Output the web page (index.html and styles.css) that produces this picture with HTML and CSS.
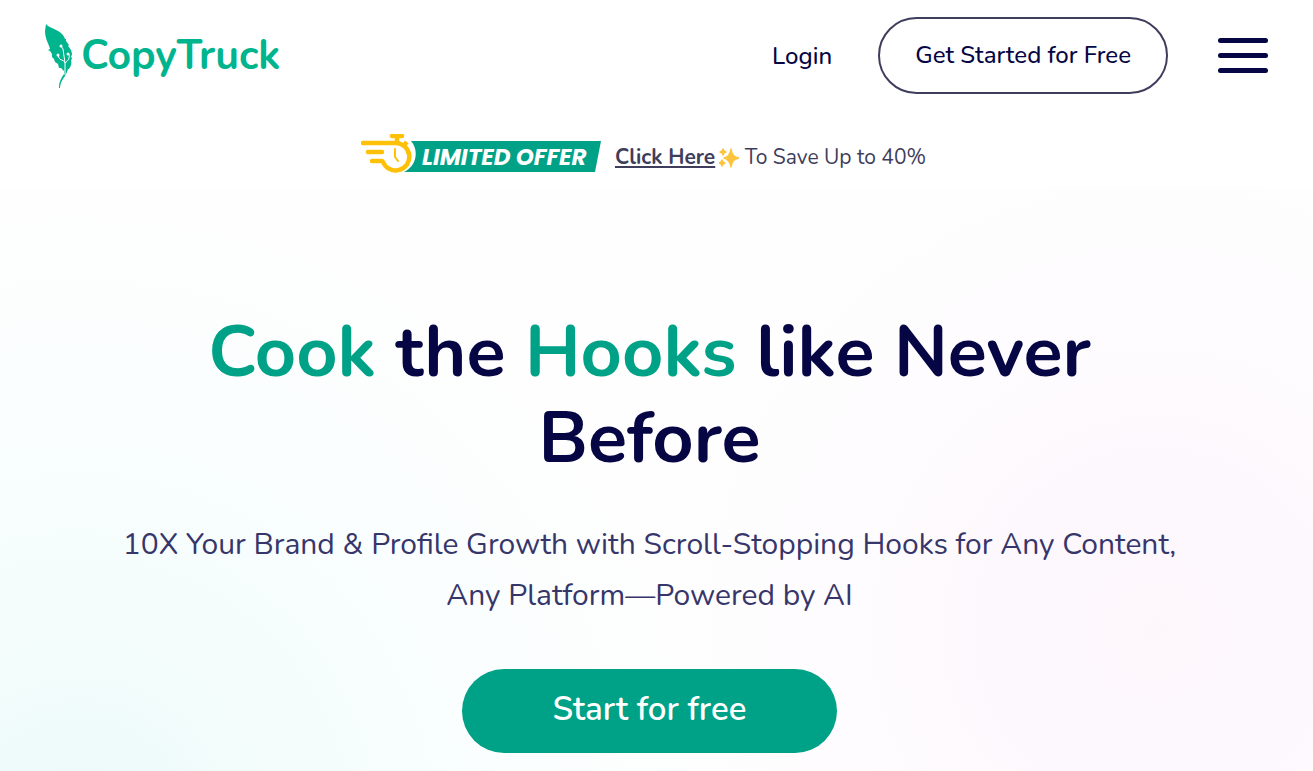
FILE: index.html
```
<!DOCTYPE html>
<html lang="en">
<head>
<meta charset="utf-8">
<meta name="viewport" content="width=device-width, initial-scale=1">
<title>CopyTruck</title>
<link rel="stylesheet" href="styles.css">
</head>
<body>

<header class="header">
  <a href="#" class="logo">
    <svg class="logo-icon" viewBox="0 0 28 66" width="28" height="66" aria-hidden="true">
      <path fill="#00b48d" d="M1 1C3 4 8 5 13 8C17 10 19 13 20 16L21 16L21 18L24 22L23 23C26 26 27 29 27 32L26 33L27 36L26 37C27 40 26 43 24 46L23 46C22 50 20 53 18 56C16 59 15 62 15 65L14 65C14 60 15 57 19 51L19 48L16 45L14 45L13 41L10 39L9 36L7 34L7 31L5 28L3 27L5 26C4 21 0 16 0 8Z"/>
      <path fill="none" stroke="#fff" stroke-width="1" d="M20 52L20 39C18 37 15 37 14 35L13 32M20 40L18 26L16 23M20 40C23 38 25 35 24 31"/>
      <g fill="#fff"><circle cx="16" cy="23" r="1.500"/><circle cx="13" cy="32" r="1.500"/><circle cx="23" cy="31" r="1.500"/></g>
    </svg>
    <span class="logo-text">CopyTruck</span>
  </a>
  <nav class="nav">
    <a href="#" class="login">Login</a>
    <a href="#" class="get-started">Get Started for Free</a>
    <button class="menu" aria-label="Menu">
      <span></span>
      <span></span>
      <span></span>
    </button>
  </nav>
</header>

<div class="offer">
  <svg class="offer-badge" viewBox="0 0 240 46" width="240" height="46" role="img" aria-label="Limited offer">
    <path fill="#00a287" d="M50 7H240L234 38H43C56 32 58 16 50 7Z"/>
    <g fill="none" stroke="#ffc107" stroke-width="4.500" stroke-linecap="round">
      <path d="M2 9H35A13.700 13.700 0 1 1 22 28M7 18H21M11 27H21"/>
      <path d="M31 2H41"/>
      <path stroke-linecap="butt" d="M36 3V9M43 11L46 8"/>
      <path stroke-width="2" d="M34 15V23L37 27"/>
    </g>
    <text class="offer-label" x="61" y="31">LIMITED OFFER</text>
  </svg>
  <p class="offer-text"><a href="#">Click Here</a><svg class="sparkles" viewBox="0 0 20 20" width="20" height="20" aria-hidden="true">
      <path fill="#fcc43d" d="M12 1C13 7 15 9 20 10C15 11 13 13 12 19C11 13 9 11 5 10C9 9 11 7 12 1ZM4 1Q4.500 3.500 7 4Q4.500 4.500 4 7Q3.500 4.500 1 4Q3.500 3.500 4 1ZM3 12Q3.500 14.500 6 15Q3.500 15.500 3 18Q2.500 15.500 0 15Q2.500 14.500 3 12Z" stroke="#fcc43d" stroke-width="1.400" stroke-linejoin="round"/>
    </svg> To Save Up to 40%</p>
</div>

<main class="hero">
  <h1><span>Cook</span> the <span>Hooks</span> like Never Before</h1>
  <p class="subtitle">10X Your Brand &amp; Profile Growth with Scroll-Stopping Hooks for Any Content, Any Platform—Powered by AI</p>
  <button class="start">Start for free</button>
</main>

</body>
</html>
```
FILE: styles.css
```
* {
  box-sizing: border-box;
}

body {
  margin: 0;
  min-height: 100vh;
  display: flex;
  flex-direction: column;
  background: #fff;
  color: #060644;
  font-family: Nunito, Lato, sans-serif;
}

a {
  color: inherit;
  text-decoration: none;
}

/* Top bar */
.header {
  display: flex;
  justify-content: space-between;
  align-items: center;
  height: 111px;
  padding: 0 45px;
}

.logo {
  display: flex;
  align-items: center;
  gap: 8px;
  color: #00b48d;
}

.logo-text {
  font-size: 41px;
  font-weight: 700;
  line-height: 48px;
}

.nav {
  display: flex;
  align-items: center;
  font-size: 24px;
  font-weight: 500;
}

.login {
  margin-right: 46px;
}

.get-started {
  padding: 20px 35px;
  margin-right: 50px;
  border: 2px solid #3f3d5c;
  border-radius: 40px;
  line-height: 33px;
  white-space: nowrap;
}

.menu {
  display: flex;
  flex-direction: column;
  gap: 10px;
  width: 50px;
  padding: 0;
  border: none;
  background: none;
  cursor: pointer;
}

.menu span {
  height: 5px;
  border-radius: 3px;
  background: #060644;
}

/* Limited offer strip */
.offer {
  display: flex;
  justify-content: center;
  align-items: center;
  gap: 14px;
  height: 77px;
  padding: 14px 26px 0 0;
}

.offer-label {
  fill: #fff;
  font-family: Poppins, Lato, sans-serif;
  font-size: 23px;
  font-weight: 700;
  font-style: italic;
}

.offer-text {
  margin: 0;
  color: #3f3d5c;
  font-size: 21px;
  line-height: 30px;
}

.offer-text a {
  font-weight: 700;
  text-decoration: underline;
}

.sparkles {
  margin-left: 4px;
  vertical-align: -4px;
}

/* Hero */
.hero {
  flex: 1;
  display: flex;
  flex-direction: column;
  align-items: center;
  padding: 121px 14px 18px 0;
  text-align: center;
  background:
    radial-gradient(circle at 88% 76%, #fdf7fc 0, #fdf8fd 160px, #fefcfe 320px, rgba(255, 255, 255, 0) 480px),
    radial-gradient(circle at 6% 110%, #ebfaf9 0, #f4fdfc 220px, #fafefe 420px, rgba(255, 255, 255, 0) 620px),
    #fefefe;
}

h1 {
  max-width: 960px;
  margin: 0;
  font-size: 72px;
  font-weight: 700;
  line-height: 86px;
}

h1 span {
  color: #00a287;
}

.subtitle {
  max-width: 1100px;
  margin: 38px 0 48px;
  color: #37366a;
  font-size: 30px;
  line-height: 51px;
}

.start {
  width: 375px;
  height: 84px;
  padding: 0 0 4px;
  border: none;
  border-radius: 42px;
  background: #00a287;
  color: #fff;
  font-family: inherit;
  font-size: 33px;
  font-weight: 600;
  cursor: pointer;
}
```
